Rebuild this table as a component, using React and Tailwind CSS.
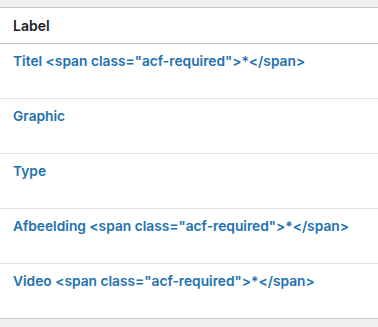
const rows = [
  'Titel <span class="acf-required">*</span>',
  'Graphic',
  'Type',
  'Afbeelding <span class="acf-required">*</span>',
  'Video <span class="acf-required">*</span>',
]

export default function App() {
  return (
    <div className="w-[378px] h-[327px] bg-[#f0f0f1] pt-[7px]" style={{ fontFamily: 'Inter, "Liberation Sans", sans-serif' }}>
      <div className="bg-white border-y border-[#c3c4c7]">
        <div className="h-[36px] px-[13px] flex items-center border-b border-[#c3c4c7] text-[14px] font-semibold text-[#1d2327]">
          Label
        </div>
        {rows.map((r, i) => (
          <div
            key={i}
            className={`px-[13px] pt-[7px] text-[13.75px] leading-[20px] font-semibold text-[#2271b1] ${i < rows.length - 1 ? 'h-[55px] border-b border-[#e2e2e4]' : 'h-[54px]'}`}
          >
            {r}
          </div>
        ))}
      </div>
    </div>
  )
}
